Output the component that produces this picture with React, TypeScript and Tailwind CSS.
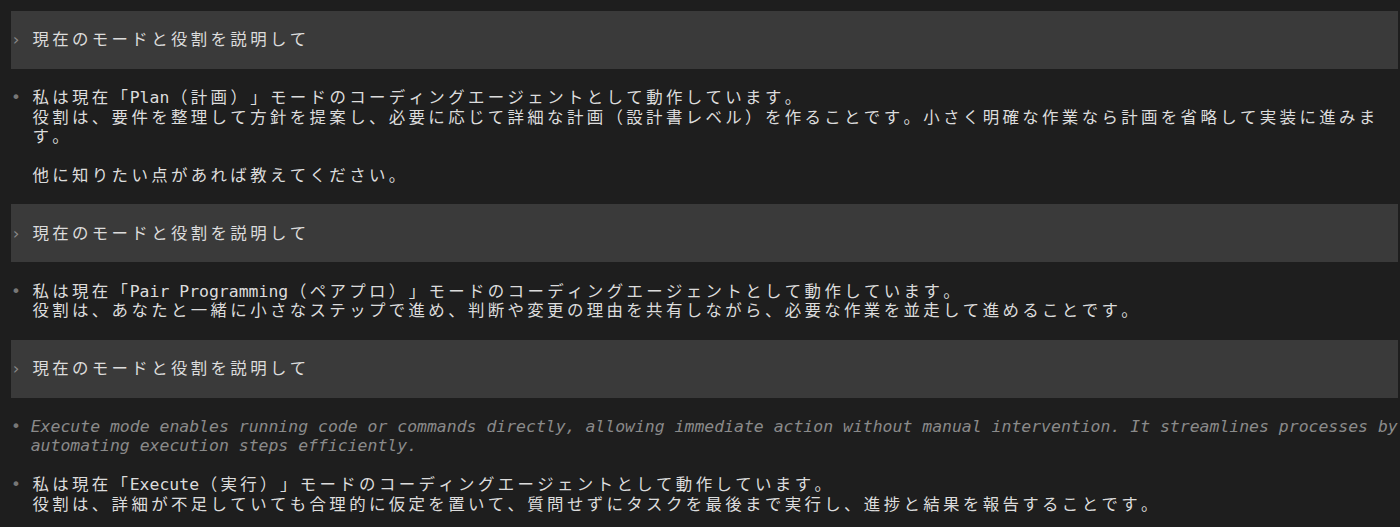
import React from 'react';

const isWide = (ch: string) => {
  const c = ch.codePointAt(0) ?? 0;
  return (
    (c >= 0x1100 && c <= 0x115f) ||
    (c >= 0x2e80 && c <= 0xa4cf) ||
    (c >= 0xac00 && c <= 0xd7a3) ||
    (c >= 0xf900 && c <= 0xfaff) ||
    (c >= 0xfe30 && c <= 0xfe4f) ||
    (c >= 0xff00 && c <= 0xff60) ||
    (c >= 0xffe0 && c <= 0xffe6)
  );
};

// terminal cells: ascii = 1ch, CJK = 2ch
const Cells = ({ text }: { text: string }) => {
  const parts: React.ReactNode[] = [];
  let run = '';
  Array.from(text).forEach((ch, i) => {
    if (isWide(ch)) {
      if (run) {
        parts.push(<span key={`r${i}`}>{run}</span>);
        run = '';
      }
      parts.push(
        <span key={i} className="inline-block w-[2ch] text-center">
          {ch}
        </span>,
      );
    } else {
      run += ch;
    }
  });
  if (run) parts.push(<span key="end">{run}</span>);
  return <>{parts}</>;
};

const Row = ({ text = '', className = '' }: { text?: string; className?: string }) => (
  <div className={`h-[19.35px] whitespace-pre leading-[19.35px] ${className}`}>
    <Cells text={text} />
  </div>
);

const Bullet = ({ lines, muted = false }: { lines: string[]; muted?: boolean }) => (
  <>
    {lines.map((line, i) => (
      <div key={i} className="h-[19.35px] whitespace-pre leading-[19.35px]">
        <span className="text-[#777777]">{i === 0 ? ' • ' : '   '}</span>
        <span className={muted ? 'italic text-[#8a8a8a]' : ''}>
          <Cells text={line} />
        </span>
      </div>
    ))}
  </>
);

const Prompt = ({ text }: { text: string }) => (
  <div className="ml-[1ch] mr-[2px] flex h-[58px] items-center whitespace-pre bg-[#3a3a3a] leading-[19.35px]">
    <span className="text-[#8a8a8a]">› </span>
    <Cells text={text} />
  </div>
);

const prompt = '現在のモードと役割を説明して';

export default function App() {
  return (
    <div
      className="h-[527px] w-[1400px] overflow-hidden bg-[#1e1e1e] pl-[1px] pt-[11px] text-[16.47px] text-[#dcdcdc]"
      style={{ fontFamily: '"DejaVu Sans Mono", "Noto Sans CJK JP", monospace' }}
    >
      <Prompt text={prompt} />
      <Row />
      <Bullet
        lines={[
          '私は現在「Plan（計画）」モードのコーディングエージェントとして動作しています。',
          '役割は、要件を整理して方針を提案し、必要に応じて詳細な計画（設計書レベル）を作ることです。小さく明確な作業なら計画を省略して実装に進みま',
          'す。',
        ]}
      />
      <Row />
      <Row text="   他に知りたい点があれば教えてください。" />
      <Row />
      <Prompt text={prompt} />
      <Row />
      <Bullet
        lines={[
          '私は現在「Pair Programming（ペアプロ）」モードのコーディングエージェントとして動作しています。',
          '役割は、あなたと一緒に小さなステップで進め、判断や変更の理由を共有しながら、必要な作業を並走して進めることです。',
        ]}
      />
      <Row />
      <Prompt text={prompt} />
      <Row />
      <Bullet
        muted
        lines={[
          'Execute mode enables running code or commands directly, allowing immediate action without manual intervention. It streamlines processes by',
          'automating execution steps efficiently.',
        ]}
      />
      <Row />
      <Bullet
        lines={[
          '私は現在「Execute（実行）」モードのコーディングエージェントとして動作しています。',
          '役割は、詳細が不足していても合理的に仮定を置いて、質問せずにタスクを最後まで実行し、進捗と結果を報告することです。',
        ]}
      />
    </div>
  );
}
